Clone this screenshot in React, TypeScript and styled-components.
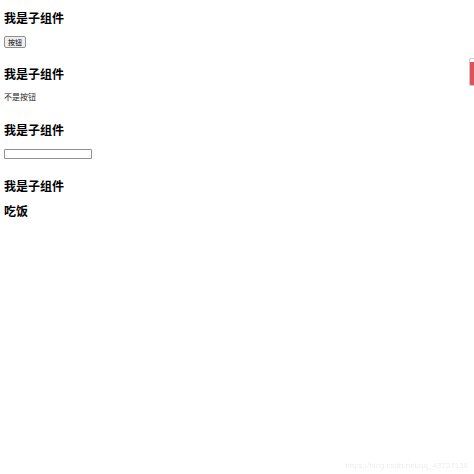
import React from 'react';
import styled, { createGlobalStyle } from 'styled-components';

const GlobalStyle = createGlobalStyle`
  html, body {
    margin: 0;
    padding: 0;
    background: #ffffff;
  }
  body {
    font-family: "Liberation Sans", "Noto Sans CJK SC", sans-serif;
    color: #000;
  }
`;

const Page = styled.div`
  padding: 5px 4px 0 4px;
  min-height: 469px;
`;

const Child = styled.section`
  display: flex;
  flex-direction: column;
  align-items: flex-start;
`;

const Title = styled.h3<{ $tight?: boolean }>`
  font-size: 12px;
  font-weight: bold;
  line-height: 14px;
  margin: ${p => (p.$tight ? '1px' : '7px')} 0 10px 0;
`;

const SmallButton = styled.button`
  font-family: "Liberation Sans", "Noto Sans CJK SC", sans-serif;
  font-size: 7px;
  height: 12px;
  padding: 0 3px;
  background: #efefef;
  border: 1px solid #8f8f8f;
  border-radius: 2px;
  color: #000;
  margin-bottom: 13px;
`;

const Note = styled.div`
  font-size: 8px;
  line-height: 12px;
  color: #222;
  margin-bottom: 13px;
`;

const TextInput = styled.input`
  width: 88px;
  height: 10px;
  box-sizing: border-box;
  border: 1px solid #8f8f8f;
  border-radius: 1px;
  padding: 0;
  margin: 1px 0 14px 0;
`;

const SideWidget = styled.div`
  position: fixed;
  right: 0;
  top: 58px;
  width: 4px;
  height: 26px;
  border: 1px solid #c8c8c8;
  border-right: none;
  border-radius: 2px 0 0 2px;
  background: linear-gradient(#ffffff 0 3px, #e0525a 3px);
`;

const Watermark = styled.div`
  position: fixed;
  right: 6px;
  bottom: 4px;
  font-size: 8px;
  color: #eeeeee;
`;

export default function App() {
  return (
    <>
      <GlobalStyle />
      <Page>
        <Child>
          <Title>我是子组件</Title>
          <SmallButton>按钮</SmallButton>
        </Child>
        <Child>
          <Title>我是子组件</Title>
          <Note>不是按钮</Note>
        </Child>
        <Child>
          <Title>我是子组件</Title>
          <TextInput />
        </Child>
        <Child>
          <Title>我是子组件</Title>
          <Title $tight>吃饭</Title>
        </Child>
      </Page>
      <SideWidget />
      <Watermark>https://blog.csdn.net/qq_43737138</Watermark>
    </>
  );
}
